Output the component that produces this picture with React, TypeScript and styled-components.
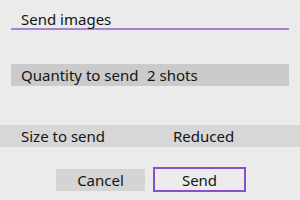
import styled, { createGlobalStyle } from 'styled-components';

const GlobalStyle = createGlobalStyle`
  body {
    margin: 0;
    background: #ebebeb;
    font-family: "Noto Sans", "Open Sans", sans-serif;
  }
`;

const Screen = styled.div`
  width: 300px;
  height: 200px;
  background: #ebebeb;
  color: #141414;
  font-size: 15px;
  overflow: hidden;
`;

const Header = styled.div`
  margin: 0 11px;
  height: 30px;
  padding-left: 10px;
  display: flex;
  align-items: flex-end;
  box-sizing: border-box;
  border-bottom: 2px solid #ab80d3;
  line-height: 17px;
`;

const Row = styled.div<{ $full?: boolean; $shade: string; $top: number }>`
  display: flex;
  align-items: center;
  height: 22px;
  margin: ${(p) => p.$top}px ${(p) => (p.$full ? 0 : 11)}px 0;
  padding-left: ${(p) => (p.$full ? 21 : 10)}px;
  background: ${(p) => p.$shade};
`;

const Label = styled.span<{ $w: number }>`
  width: ${(p) => p.$w}px;
  flex-shrink: 0;
`;

const Buttons = styled.div`
  display: flex;
  align-items: center;
  gap: 8px;
  margin-top: 20px;
  padding-left: 56px;
`;

const Button = styled.div<{ $primary?: boolean }>`
  box-sizing: border-box;
  display: flex;
  align-items: center;
  justify-content: center;
  width: ${(p) => (p.$primary ? 93 : 89)}px;
  height: ${(p) => (p.$primary ? 25 : 22)}px;
  background: ${(p) => (p.$primary ? '#ececec' : '#d4d4d4')};
  border: ${(p) => (p.$primary ? '2px solid #8a4fc9' : 'none')};
`;

export default function App() {
  return (
    <Screen>
      <GlobalStyle />
      <Header>Send images</Header>
      <Row $shade="#cbcbcb" $top={34}>
        <Label $w={126}>Quantity to send</Label>
        <span>2 shots</span>
      </Row>
      <Row $full $shade="#d7d7d7" $top={39}>
        <Label $w={152}>Size to send</Label>
        <span>Reduced</span>
      </Row>
      <Buttons>
        <Button>Cancel</Button>
        <Button $primary>Send</Button>
      </Buttons>
    </Screen>
  );
}
